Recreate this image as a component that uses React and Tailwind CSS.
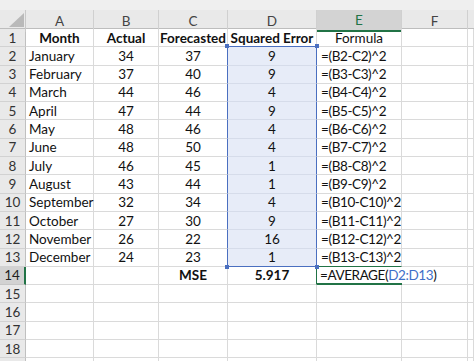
import React from 'react';

const rows = [
  ['January', 34, 37, 9, '=(B2-C2)^2'],
  ['February', 37, 40, 9, '=(B3-C3)^2'],
  ['March', 44, 46, 4, '=(B4-C4)^2'],
  ['April', 47, 44, 9, '=(B5-C5)^2'],
  ['May', 48, 46, 4, '=(B6-C6)^2'],
  ['June', 48, 50, 4, '=(B7-C7)^2'],
  ['July', 46, 45, 1, '=(B8-C8)^2'],
  ['August', 43, 44, 1, '=(B9-C9)^2'],
  ['September', 32, 34, 4, '=(B10-C10)^2'],
  ['October', 27, 30, 9, '=(B11-C11)^2'],
  ['November', 26, 22, 16, '=(B12-C12)^2'],
  ['December', 24, 23, 1, '=(B13-C13)^2'],
];

const gridCols = 'grid grid-cols-[26px_68px_65px_69px_89px_85px_66px_1fr]';
const cell = 'h-[18.3px] border-r border-b border-[#dadada] flex items-center whitespace-nowrap';

const RowHead = ({ n, active }) => (
  <div
    className={
      active
        ? 'h-[18.3px] bg-[#d2d2d2] border-b border-[#c6c6c6] border-r-2 border-r-[#217346] flex items-center justify-center text-[#222]'
        : 'h-[18.3px] bg-[#e9e9e9] border-b border-[#d2d2d2] border-r border-r-[#c0c0c0] flex items-center justify-center text-[#333]'
    }
  >
    {n}
  </div>
);

const Handle = ({ className }) => (
  <span className={`absolute w-[4px] h-[4px] bg-[#4a6fc0] ${className}`} />
);

export default function App() {
  return (
    <div className="w-[474px] h-[361px] overflow-hidden bg-white font-['Lato',sans-serif] text-[13.5px] text-[#111]">
      <div className="h-[10px] bg-[#efefef]" />

      {/* column letters */}
      <div className={`${gridCols} h-[19px] bg-[#e9e9e9] border-b border-[#bdbdbd] text-[#444]`}>
        <div className="relative border-r border-[#c8c8c8]">
          <svg className="absolute left-[9px] top-[3px]" width="15" height="14" viewBox="0 0 15 14">
            <polygon points="15,0 15,14 0,14" fill="#b9b9b9" />
          </svg>
        </div>
        {['A', 'B', 'C', 'D'].map((c) => (
          <div key={c} className="border-r border-[#d0d0d0] flex items-center justify-center">{c}</div>
        ))}
        <div className="bg-[#d3d3d3] border-r border-[#d0d0d0] border-b-2 border-b-[#217346] flex items-center justify-center text-[#217346]">E</div>
        <div className="border-r border-[#d0d0d0] flex items-center justify-center">F</div>
        <div />
      </div>

      {/* row 1 headers */}
      <div className={gridCols}>
        <RowHead n={1} />
        <div className={`${cell} justify-center font-bold`}>Month</div>
        <div className={`${cell} justify-center font-bold`}>Actual</div>
        <div className={`${cell} justify-center font-bold`}>Forecasted</div>
        <div className={`${cell} justify-center font-bold border-b-[#4a6fc0]`}>Squared Error</div>
        <div className={`${cell} justify-center`}>Formula</div>
        <div className={cell} />
        <div className={cell} />
      </div>

      {rows.map((r, i) => {
        const first = i === 0;
        const last = i === rows.length - 1;
        return (
          <div key={r[0]} className={gridCols}>
            <RowHead n={i + 2} />
            <div className={`${cell} pl-[3px]`}>{r[0]}</div>
            <div className={`${cell} justify-center`}>{r[1]}</div>
            <div className={`${cell} justify-center border-r-[#4a6fc0]`}>{r[2]}</div>
            <div
              className={`relative h-[18.3px] flex items-center justify-center bg-[#e7ecf8] border-r border-r-[#4a6fc0] ${
                last ? 'border-b border-b-[#4a6fc0]' : 'border-b border-b-[#d6dcea]'
              }`}
            >
              {r[3]}
              {first && <Handle className="-left-[3px] -top-[3px]" />}
              {first && <Handle className="-right-[3px] -top-[3px]" />}
              {last && <Handle className="-left-[3px] -bottom-[3px]" />}
              {last && <Handle className="-right-[3px] -bottom-[3px]" />}
            </div>
            <div className={`${cell} pl-[4px] tracking-[-0.4px] ${last ? 'border-b-[#217346]' : ''}`}>{r[4]}</div>
            <div className={cell} />
            <div className={cell} />
          </div>
        );
      })}

      {/* row 14: result */}
      <div className={gridCols}>
        <RowHead n={14} active />
        <div className={cell} />
        <div className={cell} />
        <div className={`${cell} justify-center font-bold`}>MSE</div>
        <div className={`${cell} justify-center font-bold border-r-[#217346]`}>5.917</div>
        <div className="relative z-10 h-[18.3px] flex items-center pl-[3px] whitespace-nowrap tracking-[-0.4px] border-b-2 border-[#217346] overflow-visible">
          <span>=AVERAGE(</span>
          <span className="text-[#3f6fc8]">D2:D13</span>
          <span>)</span>
          <span className="ml-[2px] w-px h-[14px] bg-black" />
        </div>
        <div className={`${cell} bg-white`} />
        <div className={cell} />
      </div>

      {[15, 16, 17, 18, null].map((n, idx) => (
        <div key={idx} className={gridCols}>
          <RowHead n={n} />
          {[0, 1, 2, 3, 4, 5, 6].map((k) => (
            <div key={k} className={cell} />
          ))}
        </div>
      ))}
    </div>
  );
}
